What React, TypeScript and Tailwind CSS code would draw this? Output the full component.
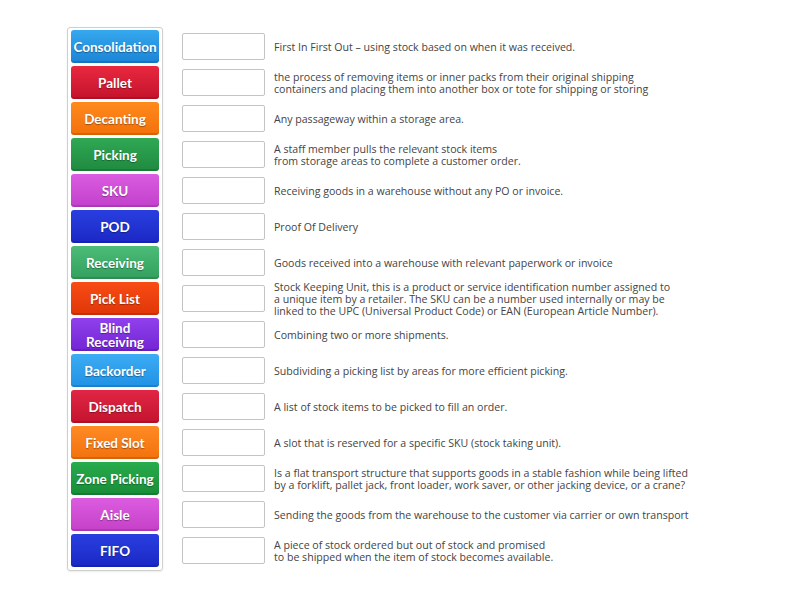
import React from "react";

type Term = { label: string; cls: string };

const terms: Term[] = [
  { label: "Consolidation", cls: "from-[#35a8ee] to-[#1b84d6]" },
  { label: "Pallet", cls: "from-[#e8283f] to-[#c4122c]" },
  { label: "Decanting", cls: "from-[#ff8a1c] to-[#f2700a]" },
  { label: "Picking", cls: "from-[#30a854] to-[#1f8a40]" },
  { label: "SKU", cls: "from-[#da5ce0] to-[#c240cc]" },
  { label: "POD", cls: "from-[#2a3ee0] to-[#1a28c4]" },
  { label: "Receiving", cls: "from-[#4cbc78] to-[#33a05e]" },
  { label: "Pick List", cls: "from-[#f84c14] to-[#e03608]" },
  { label: "Blind Receiving", cls: "from-[#9040ec] to-[#7424d4]" },
  { label: "Backorder", cls: "from-[#3cacf4] to-[#2092e4]" },
  { label: "Dispatch", cls: "from-[#e02644] to-[#c4122e]" },
  { label: "Fixed Slot", cls: "from-[#ff8a24] to-[#f2720c]" },
  { label: "Zone Picking", cls: "from-[#28ac4c] to-[#188c38]" },
  { label: "Aisle", cls: "from-[#dc5ce0] to-[#c440c8]" },
  { label: "FIFO", cls: "from-[#2a3ee0] to-[#1a28c4]" },
];

const definitions: string[][] = [
  ["First In First Out – using stock based on when it was received."],
  [
    "the process of removing items or inner packs from their original shipping",
    "containers and placing them into another box or tote for shipping or storing",
  ],
  ["Any passageway within a storage area."],
  [
    "A staff member pulls the relevant stock items",
    "from storage areas to complete a customer order.",
  ],
  ["Receiving goods in a warehouse without any PO or invoice."],
  ["Proof Of Delivery"],
  ["Goods received into a warehouse with relevant paperwork or invoice"],
  [
    "Stock Keeping Unit, this is a product or service identification number assigned to",
    "a unique item by a retailer. The SKU can be a number used internally or may be",
    "linked to the UPC (Universal Product Code) or EAN (European Article Number).",
  ],
  ["Combining two or more shipments."],
  ["Subdividing a picking list by areas for more efficient picking."],
  ["A list of stock items to be picked to fill an order."],
  ["A slot that is reserved for a specific SKU (stock taking unit)."],
  [
    "Is a flat transport structure that supports goods in a stable fashion while being lifted",
    "by a forklift, pallet jack, front loader, work saver, or other jacking device, or a crane?",
  ],
  ["Sending the goods from the warehouse to the customer via carrier or own transport"],
  [
    "A piece of stock ordered but out of stock and promised",
    "to be shipped when the item of stock becomes available.",
  ],
];

export default function App() {
  return (
    <div className="w-[800px] h-[600px] bg-white flex items-start pl-[67px] pt-[27px] font-['Open_Sans',sans-serif]">
      {/* tile bank */}
      <div className="w-[96px] border border-[#cfcfcf] rounded-[3px] px-[3px] pt-[2px] pb-[3px] flex flex-col gap-[3px] shadow-[0_1px_2px_rgba(0,0,0,0.08)]">
        {terms.map((t) => (
          <div
            key={t.label}
            className={`h-[33px] rounded-[3px] bg-linear-to-b ${t.cls} flex items-center justify-center text-center text-white font-bold text-[13.5px] leading-[14px] font-['Lato',sans-serif] [text-shadow:0_1px_1px_rgba(0,0,0,0.35)] shadow-[inset_0_-2px_0_rgba(0,0,0,0.12)]`}
          >
            {t.label === "Blind Receiving" ? (
              <span>
                Blind
                <br />
                Receiving
              </span>
            ) : (
              t.label
            )}
          </div>
        ))}
      </div>

      {/* drop targets with definitions */}
      <div className="ml-[19px] pt-[3px] flex flex-col gap-[3px]">
        {definitions.map((lines, i) => (
          <div key={i} className="h-[33px] flex items-center">
            <div className="w-[83px] h-[27px] border border-[#c4c4c4] rounded-[2px] bg-white shrink-0" />
            <div className="ml-[9px] text-[10.6px] leading-[12px] text-[#444] whitespace-nowrap">
              {lines.map((l, j) => (
                <div key={j}>{l}</div>
              ))}
            </div>
          </div>
        ))}
      </div>
    </div>
  );
}
